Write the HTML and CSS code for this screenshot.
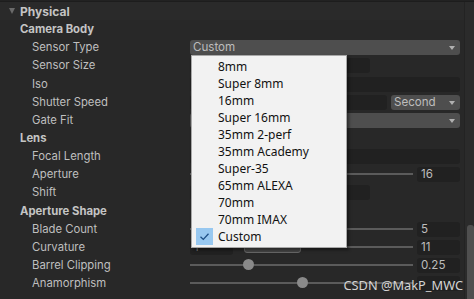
FILE: index.html
```html
<!DOCTYPE html>
<html lang="en">
<head>
    <meta charset="UTF-8">
    <title>Physical Camera</title>
<link rel="stylesheet" href="styles.css">
</head>
<body>
    <div id="inspector">
        <div class="topline"></div>
        <div class="inspector-body">
            <div id="props">
                <div class="row foldout">
                    <span class="fold-arrow"></span>
                    <span class="label bold">Physical</span>
                </div>

                <div class="row"><span class="label bold lvl1">Camera Body</span></div>
                <div class="row">
                    <span class="label lvl2">Sensor Type</span>
                    <div class="value"><div class="dropdown full">Custom<i class="caret"></i></div></div>
                </div>
                <div class="row">
                    <span class="label lvl2">Sensor Size</span>
                    <div class="value"><div class="field w180"></div></div>
                </div>
                <div class="row gap1">
                    <span class="label lvl2">Iso</span>
                    <div class="value"><div class="field full"></div></div>
                </div>
                <div class="row">
                    <span class="label lvl2">Shutter Speed</span>
                    <div class="value">
                        <div class="field grow"></div>
                        <div class="dropdown second">Second<i class="caret"></i></div>
                    </div>
                </div>
                <div class="row">
                    <span class="label lvl2">Gate Fit</span>
                    <div class="value"><div class="dropdown full"><i class="caret"></i></div></div>
                </div>

                <div class="row"><span class="label bold lvl1">Lens</span></div>
                <div class="row">
                    <span class="label lvl2">Focal Length</span>
                    <div class="value"><div class="field full"></div></div>
                </div>
                <div class="row">
                    <span class="label lvl2">Aperture</span>
                    <div class="value">
                        <div class="track"></div>
                        <div class="field num">16</div>
                    </div>
                </div>
                <div class="row">
                    <span class="label lvl2">Shift</span>
                    <div class="value"><div class="field w180"></div></div>
                </div>

                <div class="row gap2"><span class="label bold lvl1">Aperture Shape</span></div>
                <div class="row">
                    <span class="label lvl2">Blade Count</span>
                    <div class="value">
                        <div class="track"></div>
                        <div class="field num">5</div>
                    </div>
                </div>
                <div class="row">
                    <span class="label lvl2">Curvature</span>
                    <div class="value">
                        <div class="field small">1</div>
                        <div class="minmax"></div>
                        <div class="track"></div>
                        <div class="field num">11</div>
                    </div>
                </div>
                <div class="row">
                    <span class="label lvl2">Barrel Clipping</span>
                    <div class="value">
                        <div class="track"><span class="thumb" style="left: 53px"></span></div>
                        <div class="field num">0.25</div>
                    </div>
                </div>
                <div class="row">
                    <span class="label lvl2">Anamorphism</span>
                    <div class="value">
                        <div class="track"><span class="thumb" style="left: 107px"></span></div>
                        <div class="field num"></div>
                    </div>
                </div>
            </div>
            <div class="scrollbar"><div class="scroll-thumb"></div></div>
        </div>

        <!-- open popup of Sensor Type -->
        <ul class="popup">
            <li>8mm</li>
            <li>Super 8mm</li>
            <li>16mm</li>
            <li>Super 16mm</li>
            <li>35mm 2-perf</li>
            <li>35mm Academy</li>
            <li>Super-35</li>
            <li>65mm ALEXA</li>
            <li>70mm</li>
            <li>70mm IMAX</li>
            <li class="checked"><span class="check"><svg width="17" height="17" viewBox="0 0 17 17"><path d="M4.5 8.8 L7.3 11.4 L12.5 5.8" fill="none" stroke="#1d4f86" stroke-width="1.3"/></svg></span>Custom</li>
        </ul>

        <div class="watermark">CSDN @MakP_MWC</div>
    </div>
</body>
</html>
```

FILE: styles.css
```css
*{
    margin: 0;
    padding: 0;
    box-sizing: border-box;
}
body{
    background: #282828;
    font-family: Inter, Roboto, sans-serif;
}
#inspector{
    width: 474px;
    height: 299px;
    position: relative;
    overflow: hidden;
    background: #282828;
}
.topline{
    height: 2px;
    background: #222;
    border-bottom: 1px solid #1d1d1d;
}
.inspector-body{
    display: flex;
    height: 297px;
}
#props{
    flex: 1;
}
.scrollbar{
    width: 10px;
    background: #2b2b2b;
    border-left: 1px solid #232323;
    display: flex;
    flex-direction: column;
    justify-content: flex-end;
    padding-left: 2px;
}
.scroll-thumb{
    height: 74px;
    width: 7px;
    background: #4f4f4f;
    border-radius: 3px 3px 0 0;
}

.row{
    height: 18px;
    display: flex;
    align-items: center;
}
.row.gap1{
    margin-top: 1px;
}
.row.gap2{
    margin-top: 1px;
}
.foldout{
    background: #2a2a2a;
}
.fold-arrow{
    width: 0;
    height: 0;
    margin-left: 9px;
    margin-right: 5px;
    border-left: 3px solid transparent;
    border-right: 3px solid transparent;
    border-top: 6px solid #6a6a6a;
}
.label{
    width: 190px;
    flex: none;
    font-size: 11.3px;
    color: #bfbfbf;
    white-space: nowrap;
}
.foldout .label{
    width: auto;
    font-size: 12px;
}
.bold{
    font-weight: 700;
    color: #c4c4c4;
}
.lvl1{
    padding-left: 20px;
}
.lvl2{
    padding-left: 32px;
}
.value{
    width: 270px;
    display: flex;
    align-items: center;
    gap: 4px;
}

.field{
    height: 15px;
    background: #212121;
    border-radius: 3px;
    font-size: 11.6px;
    color: #bdbdbd;
    padding-left: 4px;
    line-height: 15px;
}
.field.full{ flex: 1; }
.field.grow{ flex: 1; }
.field.w180{ width: 180px; }
.field.num{ width: 43px; flex: none; }
.field.small{ width: 43px; flex: none; color: #777; margin-right: 7px; }

.dropdown{
    height: 15px;
    background: #4e4e4e;
    border-radius: 3px;
    font-size: 11.6px;
    color: #bdbdbd;
    padding-left: 3px;
    line-height: 15px;
    position: relative;
}
.dropdown.full{ flex: 1; }
.dropdown.second{ width: 69px; flex: none; padding-left: 3px; }
.caret{
    position: absolute;
    right: 5px;
    top: 6px;
    border-left: 3px solid transparent;
    border-right: 3px solid transparent;
    border-top: 4px solid #b0b0b0;
}

.track{
    flex: 1;
    height: 2px;
    background: #5b5b5b;
    position: relative;
}
.thumb{
    position: absolute;
    top: -5px;
    width: 11px;
    height: 11px;
    border-radius: 50%;
    background: #8a8a8a;
}
.minmax{
    width: 57px;
    height: 12px;
    border: 1px solid #666;
    background: #454545;
    border-radius: 3px;
    flex: none;
    margin-right: 6px;
}

.popup{
    position: absolute;
    left: 191px;
    top: 55px;
    width: 156px;
    height: 193px;
    background: #f2f2f2;
    border: 1px solid #a8a8a8;
    list-style: none;
    padding: 2px 3px 0 3px;
    box-shadow: 2px 2px 3px rgba(0, 0, 0, 0.45);
    font-family: "Noto Sans", "Open Sans", sans-serif;
    font-size: 12px;
    color: #111;
}
.popup li{
    height: 17px;
    line-height: 17px;
    padding-left: 23px;
    position: relative;
}
.check{
    position: absolute;
    left: 1px;
    top: 0;
    width: 17px;
    height: 17px;
    background: #98c8f0;
    display: flex;
}

.watermark{
    position: absolute;
    right: 11px;
    top: 276px;
    font-family: "Noto Sans", "Open Sans", sans-serif;
    font-size: 12.8px;
    color: #d4d4d4;
    white-space: nowrap;
}
```
